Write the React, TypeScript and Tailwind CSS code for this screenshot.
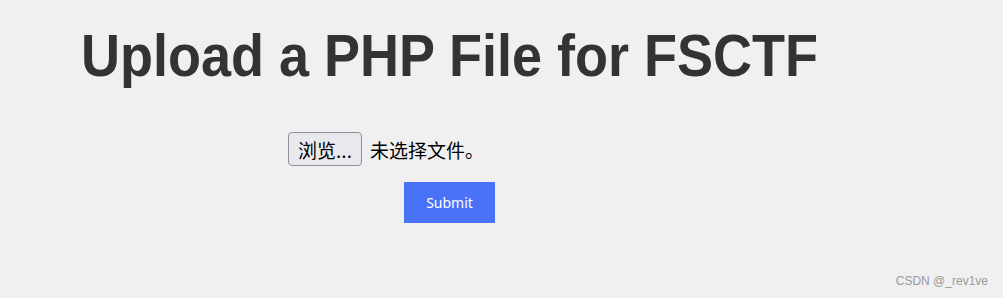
import React from "react";

export default function App() {
  return (
    <div className="w-[1003px] h-[298px] bg-[#f0f0f0] relative overflow-hidden">
      <h1 className="pl-[81px] pt-[24px] text-[60px] leading-[64px] font-bold text-[#333333] font-['Liberation_Sans',Arial,sans-serif]">
        <span className="inline-block origin-left scale-x-[0.9] whitespace-nowrap">Upload a PHP File for FSCTF</span>
      </h1>
      <div className="flex flex-col items-start mt-[44px] pl-[288px] font-['Noto_Sans_CJK_SC',sans-serif]">
        <div className="flex items-center">
          <button className="h-[34px] w-[74px] rounded-[4px] border border-[#8f8f9d] bg-[#e9e9ed] text-[19px] text-black leading-none flex items-center justify-center">
            浏览...
          </button>
          <span className="ml-[8px] text-[19px] text-black leading-none">未选择文件。</span>
        </div>
        <button className="mt-[16px] ml-[116px] w-[91px] h-[41px] bg-[#4a72f7] text-white text-[14px] font-['Noto_Sans',sans-serif]">
          Submit
        </button>
      </div>
      <div className="absolute right-[15px] bottom-[8px] text-[12px] text-[#9a9a9a] font-['Liberation_Sans',Arial,sans-serif]">
        CSDN @_rev1ve
      </div>
    </div>
  );
}
